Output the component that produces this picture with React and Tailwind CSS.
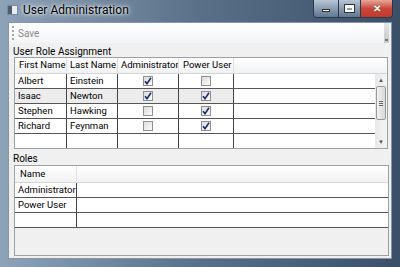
import React from "react";

const font = { fontFamily: "Roboto, 'Segoe UI', sans-serif" };

function Check({ checked }) {
  return (
    <div className="w-[10px] h-[10px] border border-[#8e8f8f] bg-gradient-to-br from-[#dcdcdc] to-[#fbfbfb] flex items-center justify-center">
      {checked && (
        <svg width="8" height="8" viewBox="0 0 8 8">
          <path d="M1 4.2 L3 6.6 L7 0.8" stroke="#1b2a6e" strokeWidth="1.6" fill="none" />
        </svg>
      )}
    </div>
  );
}

const users = [
  ["Albert", "Einstein", true, false],
  ["Isaac", "Newton", true, true],
  ["Stephen", "Hawking", false, true],
  ["Richard", "Feynman", false, true],
];

export default function App() {
  return (
    <div
      className="w-[400px] h-[267px] flex flex-col bg-gradient-to-r from-[#8ea3b8] via-[#5a7088] to-[#3b5068] text-black overflow-hidden whitespace-nowrap"
      style={font}
    >
      {/* title bar */}
      <div className="h-[22px] flex items-start relative">
        <div className="flex items-center h-[20px] pl-[7px] gap-[5px]">
          <div className="w-[11px] h-[10px] bg-[#e8ecef] border border-[#7a8a99] flex">
            <div className="w-[4px] h-full bg-[#4a5f77]"></div>
          </div>
          <span className="text-[12px] text-black" style={{ textShadow: "0 0 6px #fff, 0 0 3px #fff" }}>
            User Administration
          </span>
        </div>
        <div className="ml-auto mr-[7px] flex h-[18px] border border-t-0 border-[#2a3a4c] rounded-b-[4px] overflow-hidden">
          <div className="w-[25px] bg-gradient-to-b from-[#b7c6d6] to-[#5f7790] flex items-end justify-center pb-[5px] border-r border-[#2a3a4c]">
            <div className="w-[8px] h-[3px] bg-white border border-[#333]"></div>
          </div>
          <div className="w-[22px] bg-gradient-to-b from-[#b7c6d6] to-[#5f7790] flex items-center justify-center border-r border-[#2a3a4c]">
            <div className="w-[9px] h-[7px] border-2 border-t-[3px] border-white outline outline-1 outline-[#333]"></div>
          </div>
          <div className="w-[31px] bg-gradient-to-b from-[#e6a59a] via-[#c8473a] to-[#c23a2b] flex items-center justify-center">
            <span className="text-white font-bold text-[10px] leading-none" style={{ textShadow: "0 0 1px #333" }}>✕</span>
          </div>
        </div>
      </div>

      {/* client */}
      <div className="flex-1 mx-[8px] mb-[8px] border border-[#8796a6] bg-[#f0f0f0] flex flex-col">
        {/* toolbar */}
        <div className="h-[20px] flex items-center bg-gradient-to-b from-[#ffffff] to-[#f2f4f7] mr-[2px]">
          <div className="ml-[3px] w-[2px] h-[14px] flex flex-col justify-between">
            {[0, 1, 2, 3].map((i) => (
              <div key={i} className="w-[2px] h-[2px] bg-[#a0a8b0]"></div>
            ))}
          </div>
          <span className="ml-[4px] text-[10px] text-[#8a8a8a]">Save</span>
          <div className="ml-auto w-[5px] h-full bg-gradient-to-b from-[#e4e4e4] to-[#c8c8c8] flex items-end justify-center pb-[2px]">
            <div className="w-[3px] h-[2px] bg-[#777]"></div>
          </div>
        </div>

        {/* User Role Assignment */}
        <div className="text-[10px] leading-[10px] ml-[4px] mt-[4px]">User Role Assignment</div>
        <div className="ml-[5px] mr-[3px] border border-[#9aa1a8] bg-white flex text-[9.5px]">
          <div className="flex-1 flex flex-col">
            <div className="h-[16px] flex bg-gradient-to-b from-[#ffffff] to-[#f1f2f4] border-b border-[#d5d5d5]">
              <div className="w-[52px] flex items-center pl-[4px] border-r border-[#e0e0e0] overflow-hidden">First Name</div>
              <div className="w-[51px] flex items-center pl-[3px] border-r border-[#e0e0e0] overflow-hidden">Last Name</div>
              <div className="w-[61px] flex items-center pl-[3px] border-r border-[#e0e0e0] overflow-hidden">Administrator</div>
              <div className="w-[55px] flex items-center pl-[4px] border-r border-[#e0e0e0] overflow-hidden">Power User</div>
              <div className="flex-1"></div>
            </div>
            {users.map(([f, l, a, p], i) => (
              <div key={f} className="h-[15px] flex border-b border-[#555]">
                <div className={`w-[52px] flex items-center pl-[3px] border-r border-[#444] ${i === 1 ? "bg-[#ececec]" : ""}`}>{f}</div>
                <div className={`w-[51px] flex items-center pl-[3px] border-r border-[#444] ${i === 1 ? "bg-[#ececec]" : ""}`}>{l}</div>
                <div className={`w-[61px] flex items-center justify-center border-r border-[#444] ${i === 1 ? "bg-[#ececec]" : ""}`}>
                  <Check checked={a} />
                </div>
                <div className={`w-[55px] flex items-center justify-center border-r border-[#444] ${i === 1 ? "bg-[#ececec]" : ""}`}>
                  <Check checked={p} />
                </div>
                <div className="flex-1"></div>
              </div>
            ))}
            <div className="h-[14px] flex">
              <div className="w-[52px] border-r border-[#444]"></div>
              <div className="w-[51px] border-r border-[#444]"></div>
              <div className="w-[61px] border-r border-[#444]"></div>
              <div className="w-[55px] border-r border-[#444]"></div>
              <div className="flex-1"></div>
            </div>
          </div>
          {/* scrollbar */}
          <div className="w-[12px] flex flex-col">
            <div className="h-[16px] bg-gradient-to-b from-[#ffffff] to-[#f1f2f4] border-b border-[#d5d5d5]"></div>
            <div className="flex-1 bg-gradient-to-r from-[#e8e8e8] to-[#f4f4f4] flex flex-col items-center">
              <div className="h-[12px] flex items-center text-[6px] text-[#555] leading-none">▲</div>
              <div className="w-[10px] h-[34px] border border-[#9a9a9a] rounded-[2px] bg-gradient-to-r from-[#f2f2f2] to-[#d8d8d8] flex items-center justify-center">
                <div className="flex flex-col gap-[1px]">
                  <div className="w-[4px] h-[1px] bg-[#666]"></div>
                  <div className="w-[4px] h-[1px] bg-[#666]"></div>
                  <div className="w-[4px] h-[1px] bg-[#666]"></div>
                </div>
              </div>
              <div className="flex-1"></div>
              <div className="h-[12px] flex items-center text-[6px] text-[#555] leading-none">▼</div>
            </div>
          </div>
        </div>

        {/* Roles */}
        <div className="text-[10px] leading-[11px] ml-[4px] mt-[4px]">Roles</div>
        <div className="ml-[5px] mr-[2px] mt-[1px] mb-[2px] flex-1 border border-[#9aa1a8] bg-[#f0f0f0] flex flex-col text-[9.5px]">
          <div className="h-[17px] flex bg-gradient-to-b from-[#ffffff] to-[#f1f2f4] border-b border-[#d5d5d5]">
            <div className="w-[62px] flex items-center pl-[5px] border-r border-[#e0e0e0]">Name</div>
            <div className="flex-1"></div>
          </div>
          {["Administrator", "Power User", ""].map((r) => (
            <div key={r || "empty"} className="h-[15px] flex bg-white border-b border-[#555]">
              <div className="w-[62px] flex items-center pl-[3px] border-r border-[#444]">{r}</div>
              <div className="flex-1"></div>
            </div>
          ))}
          <div className="flex-1"></div>
        </div>
      </div>
    </div>
  );
}
